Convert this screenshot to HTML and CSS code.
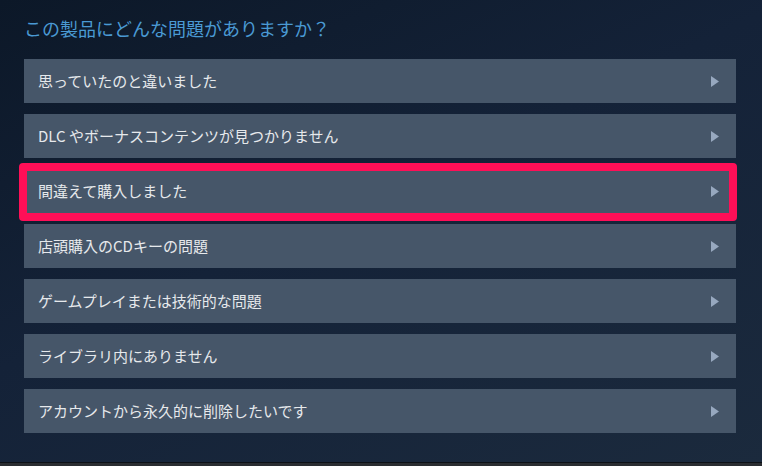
FILE: index.html
```html
<!DOCTYPE html>
<html lang="ja">
<head>
<meta charset="utf-8">
<title>この製品にどんな問題がありますか？</title>
<link rel="stylesheet" href="styles.css">
</head>
<body>
<div class="page">
  <main class="content">
    <h2 class="title">この製品にどんな問題がありますか？</h2>
    <ul class="options">
      <li class="option"><span class="label">思っていたのと違いました</span><svg class="arrow" viewBox="0 0 8 11" width="8" height="11"><path d="M0 0 L8 5.5 L0 11 Z"/></svg></li>
      <li class="option"><span class="label">DLC やボーナスコンテンツが見つかりません</span><svg class="arrow" viewBox="0 0 8 11" width="8" height="11"><path d="M0 0 L8 5.5 L0 11 Z"/></svg></li>
      <li class="option option--highlight"><span class="label">間違えて購入しました</span><svg class="arrow" viewBox="0 0 8 11" width="8" height="11"><path d="M0 0 L8 5.5 L0 11 Z"/></svg></li>
      <li class="option"><span class="label">店頭購入のCDキーの問題</span><svg class="arrow" viewBox="0 0 8 11" width="8" height="11"><path d="M0 0 L8 5.5 L0 11 Z"/></svg></li>
      <li class="option"><span class="label">ゲームプレイまたは技術的な問題</span><svg class="arrow" viewBox="0 0 8 11" width="8" height="11"><path d="M0 0 L8 5.5 L0 11 Z"/></svg></li>
      <li class="option"><span class="label">ライブラリ内にありません</span><svg class="arrow" viewBox="0 0 8 11" width="8" height="11"><path d="M0 0 L8 5.5 L0 11 Z"/></svg></li>
      <li class="option"><span class="label">アカウントから永久的に削除したいです</span><svg class="arrow" viewBox="0 0 8 11" width="8" height="11"><path d="M0 0 L8 5.5 L0 11 Z"/></svg></li>
    </ul>
  </main>
  <div class="bottom-bar"></div>
</div>
</body>
</html>
```

FILE: styles.css
```css
html, body {
  margin: 0;
  padding: 0;
  height: 100%;
}

body {
  font-family: "Noto Sans CJK JP", "Noto Sans", "DejaVu Sans", sans-serif;
  background: linear-gradient(155deg, #0c1828 0%, #142238 45%, #1b2a3d 100%);
  color: #e4e7eb;
}

.page {
  display: flex;
  flex-direction: column;
  min-height: 100vh;
}

.content {
  padding: 16px 26px 0 24px;
}

.title {
  margin: 0 0 19px 0;
  font-size: 18px;
  line-height: 24px;
  font-weight: normal;
  color: #4a9ad4;
}

.options {
  list-style: none;
  margin: 0;
  padding: 0;
  display: flex;
  flex-direction: column;
  gap: 11px;
  width: 712px;
}

.option {
  position: relative;
  height: 44px;
  box-sizing: border-box;
  display: flex;
  align-items: center;
  justify-content: space-between;
  padding: 0 17px 0 14px;
  background: #465669;
  font-size: 15px;
  color: #e6e9ec;
}

.label {
  line-height: 20px;
}

.arrow {
  display: block;
  fill: #97a8bf;
}

.option--highlight::after {
  content: "";
  position: absolute;
  left: -5px;
  top: -6px;
  width: 718px;
  height: 58px;
  box-sizing: border-box;
  border: 8px solid #ff0f57;
  border-radius: 4px;
}

.bottom-bar {
  margin-top: auto;
  height: 3px;
  border-top: 1px solid #0d1116;
  background: #2a2d31;
}
```
